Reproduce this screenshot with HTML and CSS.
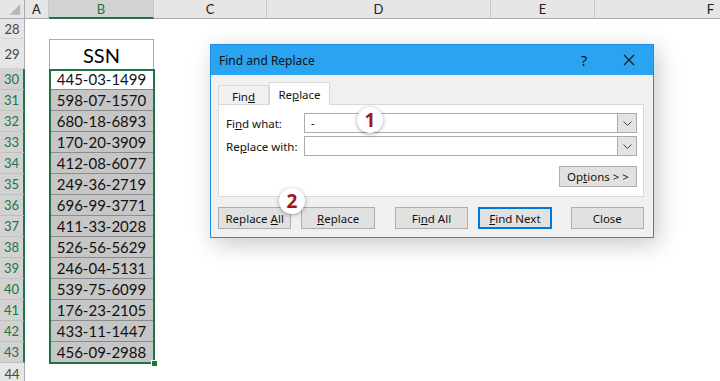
FILE: index.html
```html
<!DOCTYPE html>
<html lang="en">
<head>
    <meta charset="UTF-8">
    <title>Find and Replace</title>
    <link rel="stylesheet" href="styles.css">
</head>
<body>
    <div class="sheet">
        <div class="row col-head">
            <div class="rh corner"><svg width="25" height="18" viewBox="0 0 25 18"><polygon points="21,4 21,15 10,15" fill="#b7b7b7"/></svg></div>
            <div class="c a">A</div>
            <div class="c b sel">B</div>
            <div class="c cc">C</div>
            <div class="c d">D</div>
            <div class="c e">E</div>
            <div class="c f">F</div>
        </div>
        <div class="row r28">
            <div class="rh">28</div>
        </div>
        <div class="row r29">
            <div class="rh">29</div>
            <div class="cell a"></div>
            <div class="cell b ssn-head">SSN</div>
        </div>
        <div class="range">
            <div class="row data"><div class="rh on">30</div><div class="cell a"></div><div class="cell b val active">445-03-1499</div></div>
            <div class="row data"><div class="rh on">31</div><div class="cell a"></div><div class="cell b val">598-07-1570</div></div>
            <div class="row data"><div class="rh on">32</div><div class="cell a"></div><div class="cell b val">680-18-6893</div></div>
            <div class="row data"><div class="rh on">33</div><div class="cell a"></div><div class="cell b val">170-20-3909</div></div>
            <div class="row data"><div class="rh on">34</div><div class="cell a"></div><div class="cell b val">412-08-6077</div></div>
            <div class="row data"><div class="rh on">35</div><div class="cell a"></div><div class="cell b val">249-36-2719</div></div>
            <div class="row data"><div class="rh on">36</div><div class="cell a"></div><div class="cell b val">696-99-3771</div></div>
            <div class="row data"><div class="rh on">37</div><div class="cell a"></div><div class="cell b val">411-33-2028</div></div>
            <div class="row data"><div class="rh on">38</div><div class="cell a"></div><div class="cell b val">526-56-5629</div></div>
            <div class="row data"><div class="rh on">39</div><div class="cell a"></div><div class="cell b val">246-04-5131</div></div>
            <div class="row data"><div class="rh on">40</div><div class="cell a"></div><div class="cell b val">539-75-6099</div></div>
            <div class="row data"><div class="rh on">41</div><div class="cell a"></div><div class="cell b val">176-23-2105</div></div>
            <div class="row data"><div class="rh on">42</div><div class="cell a"></div><div class="cell b val">433-11-1447</div></div>
            <div class="row data"><div class="rh on">43</div><div class="cell a"></div><div class="cell b val">456-09-2988</div></div>
            <div class="sel-box"></div>
            <div class="fill-handle"></div>
        </div>
        <div class="row r44">
            <div class="rh">44</div>
        </div>
    </div>

    <div class="dialog">
        <div class="title-bar">
            <span class="title">Find and Replace</span>
            <span class="help">?</span>
            <svg class="close-x" width="12" height="12" viewBox="0 0 12 12"><path d="M1 1 L11 11 M11 1 L1 11" stroke="#1a1a1a" stroke-width="1.2"/></svg>
        </div>
        <div class="dlg-body">
            <div class="tabs">
                <div class="tab">Fin<u>d</u></div>
                <div class="tab tab-on">Re<u>p</u>lace</div>
            </div>
            <div class="panel">
                <div class="field">
                    <label>Fi<u>n</u>d what:</label>
                    <div class="combo"><span class="combo-text">-</span><span class="drop"><svg width="9" height="5" viewBox="0 0 9 5"><path d="M0.5 0.5 L4.5 4.5 L8.5 0.5" fill="none" stroke="#444" stroke-width="1"/></svg></span></div>
                </div>
                <div class="field">
                    <label>Re<u>p</u>lace with:</label>
                    <div class="combo"><span class="combo-text"></span><span class="drop"><svg width="9" height="5" viewBox="0 0 9 5"><path d="M0.5 0.5 L4.5 4.5 L8.5 0.5" fill="none" stroke="#444" stroke-width="1"/></svg></span></div>
                </div>
                <div class="options-row">
                    <button class="btn btn-options">Op<u>t</u>ions &gt; &gt;</button>
                </div>
            </div>
            <div class="buttons">
                <button class="btn b-all">Replace <u>A</u>ll</button>
                <button class="btn b-rep"><u>R</u>eplace</button>
                <button class="btn b-findall">Fi<u>n</u>d All</button>
                <button class="btn b-next"><u>F</u>ind Next</button>
                <button class="btn b-close">Close</button>
            </div>
        </div>
    </div>

    <div class="badge badge-1">1</div>
    <div class="badge badge-2">2</div>
</body>
</html>
```

FILE: styles.css
```css
body {
    margin: 0;
    width: 720px;
    height: 381px;
    overflow: hidden;
    background-color: #ffffff;
    font-family: Lato, "Liberation Sans", sans-serif;
    position: relative;
}
.sheet {
    display: flex;
    flex-direction: column;
}
.row {
    display: flex;
}
.rh {
    width: 25px;
    flex: none;
    background-color: #e6e6e6;
    border-right: 1px solid #ababab;
    color: #444;
    font-size: 13px;
    display: flex;
    align-items: center;
    justify-content: center;
    box-sizing: border-box;
}
.rh.on {
    background-color: #d2d2d2;
    color: #217346;
    border-right: 2px solid #217346;
}
.col-head {
    height: 19px;
}
.col-head .rh {
    border-bottom: 1px solid #ababab;
    padding: 0;
}
.col-head .c {
    background-color: #e6e6e6;
    border-bottom: 1px solid #ababab;
    border-right: 1px solid #c6c6c6;
    box-sizing: border-box;
    font-size: 13px;
    color: #222;
    display: flex;
    align-items: center;
    justify-content: center;
}
.col-head .c.sel {
    background-color: #d2d2d2;
    color: #217346;
    border-bottom: 2px solid #217346;
}
.a { width: 24px; flex: none; }
.b { width: 105px; flex: none; }
.cc { width: 113px; flex: none; }
.d { width: 224px; flex: none; }
.e { width: 104px; flex: none; }
.f { flex: 1; border-right: none !important; }
.f { justify-content: flex-end !important; padding-right: 6px; }
.r28 {
    height: 20px;
}
.r29 {
    height: 30px;
}
.r28 .rh, .r29 .rh, .r44 .rh {
    border-bottom: 1px solid #d4d4d4;
}
.ssn-head {
    box-sizing: border-box;
    border: 1px solid #ababab;
    border-bottom: none;
    font-size: 20px;
    display: flex;
    align-items: flex-end;
    justify-content: center;
    padding-bottom: 2px;
}
.range {
    position: relative;
}
.data {
    height: 21px;
}
.data .rh {
    border-bottom: 1px solid #c0c0c0;
}
.val {
    box-sizing: border-box;
    background-color: #c6c6c6;
    border-bottom: 1px solid #8c8c8c;
    border-left: 1px solid #fff;
    border-right: 1px solid #fff;
    font-size: 15px;
    color: #111;
    display: flex;
    align-items: center;
    justify-content: center;
}
.val.active {
    background-color: #ffffff;
}
.sel-box {
    position: absolute;
    left: 49px;
    top: 0;
    width: 106px;
    height: 295px;
    box-sizing: border-box;
    border: 2px solid #217346;
}
.fill-handle {
    position: absolute;
    left: 151px;
    top: 291px;
    width: 5px;
    height: 5px;
    background-color: #217346;
    border: 1px solid #fff;
}
.r44 {
    height: 22px;
}

/* dialog */
.dialog {
    position: absolute;
    left: 210px;
    top: 44px;
    width: 444px;
    height: 194px;
    box-sizing: border-box;
    border: 1px solid #1c8ee6;
    background-color: #f0f0f0;
    box-shadow: 4px 6px 22px rgba(0, 0, 0, 0.22);
    font-family: "Noto Sans", "Open Sans", sans-serif;
    font-size: 11.5px;
    color: #111;
}
.title-bar {
    height: 30px;
    background-color: #2aa3f1;
    display: flex;
    align-items: center;
    padding-left: 8px;
}
.title {
    font-size: 12px;
    flex: 1;
    color: #111;
}
.help {
    font-size: 14px;
    margin-right: 36px;
}
.close-x {
    margin-right: 18px;
}
.dlg-body {
    padding: 7px 9px 0 7px;
}
.tabs {
    display: flex;
    align-items: flex-end;
    height: 22px;
}
.tab {
    width: 51px;
    height: 19px;
    box-sizing: border-box;
    border: 1px solid #d9d9d9;
    border-bottom: none;
    display: flex;
    align-items: center;
    justify-content: center;
    padding-top: 2px;
}
.tab-on {
    width: 61px;
    height: 23px;
    background-color: #ffffff;
    margin-bottom: -1px;
    position: relative;
    z-index: 1;
    padding-top: 0;
}
.panel {
    height: 93px;
    box-sizing: border-box;
    background-color: #ffffff;
    border: 1px solid #d9d9d9;
    padding: 8px 6px 0 7px;
}
.field {
    display: flex;
    align-items: center;
    height: 20px;
    margin-bottom: 3px;
}
.field label {
    width: 78px;
}
.combo {
    width: 333px;
    height: 20px;
    box-sizing: border-box;
    border: 1px solid #ababab;
    display: flex;
}
.combo-text {
    flex: 1;
    padding-left: 6px;
    line-height: 17px;
}
.drop {
    width: 18px;
    background-color: #e3e3e3;
    border-left: 1px solid #ababab;
    display: flex;
    align-items: center;
    justify-content: center;
}
.options-row {
    display: flex;
    justify-content: flex-end;
    margin-top: 10px;
    padding-right: 0;
}
.btn {
    font-family: "Noto Sans", "Open Sans", sans-serif;
    font-size: 11.5px;
    color: #111;
    background-color: #e1e1e1;
    border: 1px solid #adadad;
    height: 22px;
    width: 74px;
    padding: 0;
    box-sizing: border-box;
}
.btn-options {
    width: 78px;
    height: 21px;
}
.buttons {
    display: flex;
    margin-top: 10px;
}
.b-rep { margin-left: 10px; }
.b-findall { margin-left: 20px; }
.b-next {
    margin-left: 10px;
    border: 2px solid #0078d7;
}
.b-close { margin-left: 19px; }

/* callouts */
.badge {
    position: absolute;
    width: 26px;
    height: 26px;
    border-radius: 50%;
    background-color: #ffffff;
    box-shadow: 0 1px 4px rgba(0, 0, 0, 0.35);
    color: #a3161c;
    font-family: "Open Sans", "Liberation Sans", sans-serif;
    font-weight: bold;
    font-size: 19px;
    display: flex;
    align-items: center;
    justify-content: center;
}
.badge-1 {
    left: 357px;
    top: 107px;
}
.badge-2 {
    left: 279px;
    top: 188px;
}
```
